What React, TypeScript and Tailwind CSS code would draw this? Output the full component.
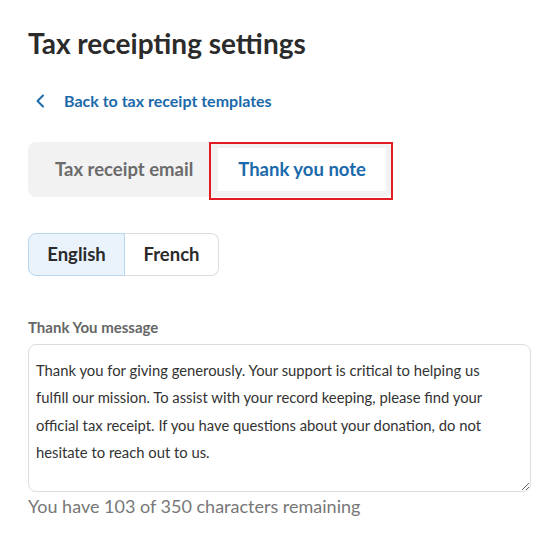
import React from "react";

const text =
  "Thank you for giving generously. Your support is critical to helping us fulfill our mission. To assist with your record keeping, please find your official tax receipt. If you have questions about your donation, do not hesitate to reach out to us.";

export default function App() {
  return (
    <div className="w-[559px] h-[548px] bg-white px-[28px] pt-[25px] font-['Lato',sans-serif]">
      <h1 className="text-[28px] leading-[36px] font-bold text-[#2b2b2b]">Tax receipting settings</h1>
      <a className="mt-[30px] flex items-center h-[20px] text-[#1a6aab] font-bold text-[16px]">
        <svg width="10" height="14" viewBox="0 0 10 14" className="ml-[7px] mr-[19px]" fill="none">
          <path d="M8 1.5 L2.5 7 L8 12.5" stroke="#1a6aab" strokeWidth="2" strokeLinecap="round" strokeLinejoin="round" />
        </svg>
        Back to tax receipt templates
      </a>
      <div className="relative mt-[31px] w-fit">
        <div className="flex gap-[4px] bg-[#f2f2f2] rounded-[8px] p-[6px]">
          <div className="h-[43px] px-[21px] flex items-center text-[18.5px] font-bold text-[#6b6b6b]">Tax receipt email</div>
          <div className="h-[43px] px-[20px] flex items-center bg-white text-[18.5px] font-bold text-[#1a6aab]">Thank you note</div>
        </div>
        <div className="absolute right-[-1px] top-0 w-[184px] h-[58px] border-2 border-[#e31b23]" />
      </div>
      <div className="mt-[36px] flex w-fit">
        <div className="h-[43px] w-[97px] flex items-center justify-center bg-[#eaf3fb] border border-[#b9d6ee] rounded-l-[8px] text-[18.5px] font-bold text-[#2b2b2b]">English</div>
        <div className="h-[43px] w-[94px] flex items-center justify-center bg-white border border-l-0 border-[#dddddd] rounded-r-[8px] text-[18.5px] font-bold text-[#2b2b2b]">French</div>
      </div>
      <div className="mt-[42px] text-[15px] leading-[18px] font-bold text-[#666666]">Thank You message</div>
      <textarea
        readOnly
        defaultValue={text}
        className="mt-[8px] block w-[503px] h-[148px] border border-[#dddddd] rounded-[8px] pl-[7px] pr-[24px] pt-[12px] text-[14.8px] leading-[27.3px] text-[#333333] outline-none font-['Lato',sans-serif]"
      />
      <div className="mt-[1px] text-[18px] leading-[26px] text-[#777777]">You have 103 of 350 characters remaining</div>
    </div>
  );
}
